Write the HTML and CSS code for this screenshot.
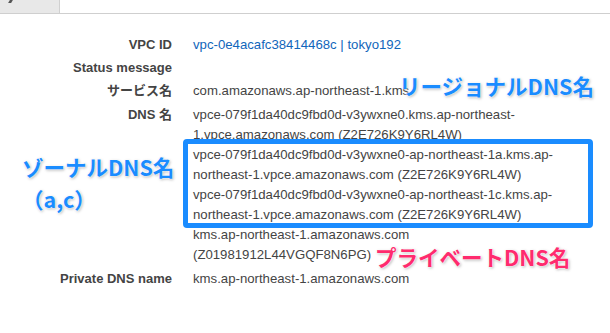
FILE: index.html
```html
<!DOCTYPE html>
<html lang="ja">
<head>
  <meta charset="UTF-8" />
  <title>VPC Endpoint details</title>
  <link rel="stylesheet" href="styles.css">
</head>
<body>
  <div class="tabs">
    <div class="tab"><span class="tab-mark"></span></div>
  </div>

  <div class="details">
    <div class="label">VPC ID</div>
    <div class="value"><a href="#">vpc-0e4acafc38414468c | tokyo192</a></div>

    <div class="label short">Status message</div>
    <div class="value"></div>

    <div class="label">サービス名</div>
    <div class="value">com.amazonaws.ap-northeast-1.kms</div>

    <div class="label">DNS 名</div>
    <div class="value">
      <div>vpce-079f1da40dc9fbd0d-v3ywxne0.kms.ap-northeast-1.vpce.amazonaws.com (Z2E726K9Y6RL4W)</div>
      <div>vpce-079f1da40dc9fbd0d-v3ywxne0-ap-northeast-1a.kms.ap-northeast-1.vpce.amazonaws.com (Z2E726K9Y6RL4W)</div>
      <div>vpce-079f1da40dc9fbd0d-v3ywxne0-ap-northeast-1c.kms.ap-northeast-1.vpce.amazonaws.com (Z2E726K9Y6RL4W)</div>
      <div>kms.ap-northeast-1.amazonaws.com (Z01981912L44VGQF8N6PG)</div>
    </div>

    <div class="label">Private DNS name</div>
    <div class="value">kms.ap-northeast-1.amazonaws.com</div>
  </div>

  <!-- annotations drawn over the screenshot -->
  <div class="highlight-box"></div>
  <div class="note note-blue note-regional">リージョナルDNS名</div>
  <div class="note note-blue note-zonal">ゾーナルDNS名<br>（a,c）</div>
  <div class="note note-pink note-private">プライベートDNS名</div>
</body>
</html>
```

FILE: styles.css
```css
body {
  margin: 0;
  background: #fff;
  color: #444;
  font-family: "Liberation Sans", Arial, "Noto Sans CJK JP", sans-serif;
  font-size: 13.2px;
  position: relative;
  height: 333px;
  overflow: hidden;
}

.tabs {
  display: flex;
  height: 13px;
  border-bottom: 1px solid #cfcfcf;
}

.tab {
  width: 60px;
  background: #e8e8e8;
  border-right: 1px solid #d0d0d0;
  box-sizing: border-box;
  padding-left: 9px;
}

.tab-mark {
  display: block;
  width: 3px;
  height: 3px;
  background: #555;
  transform: skewX(-30deg);
}

.details {
  display: grid;
  grid-template-columns: 172px 376px;
  column-gap: 21px;
  row-gap: 4px;
  padding-top: 21px;
  line-height: 20px;
}

.label {
  text-align: right;
  font-weight: bold;
  font-size: 13px;
  color: #444;
}

.label.short {
  line-height: 18px;
}

.value {
  color: #444;
}

.value a {
  color: #1166bb;
  text-decoration: none;
}

.highlight-box {
  position: absolute;
  left: 183px;
  top: 139px;
  width: 410px;
  height: 89px;
  border: 5px solid #1a8cff;
  border-radius: 4px;
  box-sizing: border-box;
}

.note {
  position: absolute;
  font-family: "Noto Sans CJK JP", sans-serif;
  font-weight: bold;
  font-size: 21.5px;
  line-height: 32px;
  white-space: nowrap;
  text-shadow: 0 0 2px #fff, 0 0 2px #fff, 1px 1px 3px rgba(0, 0, 0, 0.35);
}

.note-blue {
  color: #1a8cff;
}

.note-pink {
  color: #ff2b6e;
}

.note-regional {
  left: 399px;
  top: 70px;
}

.note-zonal {
  left: 22px;
  top: 151px;
  line-height: 32px;
}

.note-private {
  left: 375px;
  top: 241px;
}
```
